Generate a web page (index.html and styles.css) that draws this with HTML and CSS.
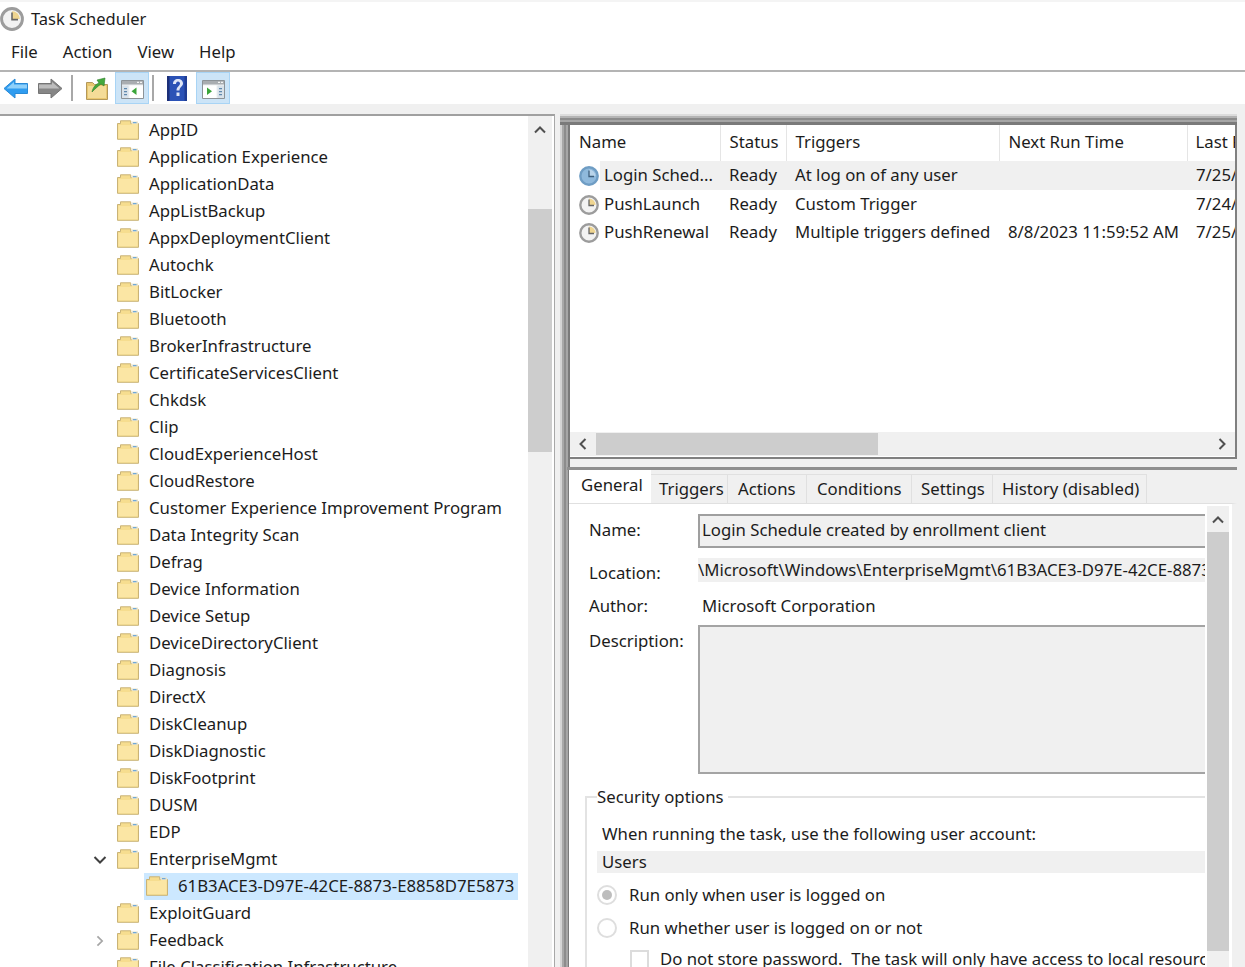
FILE: index.html
```html
<!DOCTYPE html>
<html lang="en">
<head>
    <meta charset="UTF-8">
    <meta name="viewport" content="width=device-width, initial-scale=1.0">
    <title>Task Scheduler</title>
    <link rel="stylesheet" href="styles.css">
</head>
<body>
    <svg class="defs" width="0" height="0" aria-hidden="true">
        <defs>
            <symbol id="folder" viewBox="0 0 22 20">
                <path d="M.5 3.500h3V.8h10.200v2.700H21.500v15.800H.5z" fill="#f6dd8f" stroke="#c9b377"/>
                <path d="M1.500 5h13l1.500-1.500h4.500V18.300H1.500z" fill="#fbe6a4"/>
                <path d="M14.500 1.500h6.500v2.500h-6.500z" fill="#e9e2c8"/>
                <path d="M16 2h3.500v1.200H16z" fill="#6fa8d8"/>
            </symbol>
            <symbol id="clock" viewBox="0 0 20 20">
                <circle cx="10" cy="10" r="8.700" fill="#f2f2f2" stroke="#9c9c9c" stroke-width="2.400"/>
                <path d="M10 3.500a6.500 6.500 0 0 1 6.500 6.500H10z" fill="#efd590"/>
                <path d="M10 4.500V10.500H15" fill="none" stroke="#666" stroke-width="1.300"/>
            </symbol>
            <symbol id="clock-run" viewBox="0 0 20 20">
                <circle cx="10" cy="10" r="8.700" fill="#8fb9dc" stroke="#6f9dc4" stroke-width="2.400"/>
                <path d="M10 3.500a6.500 6.500 0 0 1 6.500 6.500H10z" fill="#b9d4ea"/>
                <path d="M10 4.500V10.500H15" fill="none" stroke="#3d5f7d" stroke-width="1.300"/>
            </symbol>
            <symbol id="pane-left" viewBox="0 0 23 19">
                <path d="M.5.500h22v18H.5z" fill="#eef0f2" stroke="#8c9297"/>
                <path d="M1 1h21v3.500H1z" fill="#a9adb1"/>
                <path d="M16 1.800h2v1.200h-2zM19 1.800h2v1.200h-2z" fill="#f4f4f4"/>
                <path d="M1 5.500h6.500V18H1z" fill="#d9e2ea"/>
                <path d="M3 8h3v1.300H3zM3 11h3v1.300H3zM3 14h3v1.300H3z" fill="#5f88ad"/>
                <path d="M8.500 5.500H22V18H8.500z" fill="#fff"/>
                <path d="M15.500 7.500v7.500L10.500 11.250z" fill="#3aa53a"/>
            </symbol>
            <symbol id="pane-right" viewBox="0 0 23 19">
                <path d="M.5.500h22v18H.5z" fill="#eef0f2" stroke="#8c9297"/>
                <path d="M1 1h21v3.500H1z" fill="#a9adb1"/>
                <path d="M16 1.800h2v1.200h-2zM19 1.800h2v1.200h-2z" fill="#f4f4f4"/>
                <path d="M15.500 5.500H22V18h-6.500z" fill="#d9e2ea"/>
                <path d="M17 8h3v1.300h-3zM17 11h3v1.300h-3zM17 14h3v1.300h-3z" fill="#5f88ad"/>
                <path d="M1 5.500h13.500V18H1z" fill="#fff"/>
                <path d="M5 7.500v7.500l5-3.750z" fill="#3aa53a"/>
            </symbol>
        </defs>
    </svg>

    <header class="title-bar">
        <svg class="app-icon"><use href="#clock"/></svg>
        <span>Task Scheduler</span>
    </header>

    <nav class="menu-bar">
        <span>File</span>
        <span>Action</span>
        <span>View</span>
        <span>Help</span>
    </nav>

    <div class="toolbar">
        <svg class="tool-arrow" viewBox="0 0 25 21">
            <path d="M1 10.500 12 1v4.500H24.500v10H12V20z" fill="#2f9cf0" stroke="#2a8ad6"/>
            <path d="M4 10 11 4v2.500h13V10.500H4z" fill="#8fd0fa"/>
        </svg>
        <svg class="tool-arrow" viewBox="0 0 25 21">
            <path d="M24 10.500 13 1v4.500H.5v10H13V20z" fill="#868686" stroke="#757575"/>
            <path d="M21 10 14 4v2.500H1V10.500h20z" fill="#bdbdbd"/>
        </svg>
        <i class="sep"></i>
        <svg class="tool-up" viewBox="0 0 22 24">
            <path d="M.5 6.500h6l2 2h13v15H.5z" fill="#e9c76f" stroke="#b3985a"/>
            <path d="M2 10h18v12H2z" fill="#f4dc98"/>
            <path d="M6 16c1-5 4-8 7-9L11 4l8-2-1 8-3-2c-3 2-6 5-9 8z" fill="#43a83c" stroke="#2d7d2a" stroke-width=".6"/>
        </svg>
        <span class="tool-btn"><svg class="tool-pane"><use href="#pane-left"/></svg></span>
        <i class="sep"></i>
        <svg class="tool-help" viewBox="0 0 20 25">
            <path d="M0 0h20v25H0z" fill="#2b52b6"/>
            <path d="M0 0h2.500v25H0z" fill="#1c2f78"/>
            <path d="M17.500 0H20v25h-2.500z" fill="#1f3d94"/>
            <path d="M6 8c0-3 2-5 5-5s5 2 5 4.500c0 3-3.500 3.500-3.500 7H9.500c0-4 3.500-4.500 3.500-7 0-1-.8-2-2-2s-2 1-2 2.500zM9.500 16.500h3V20h-3z" fill="#dfe6f7"/>
        </svg>
        <span class="tool-btn"><svg class="tool-pane"><use href="#pane-right"/></svg></span>
    </div>

    <main class="panes">
        <section class="tree-pane">
            <ul class="tree">
                <li><svg class="folder"><use href="#folder"/></svg>AppID</li>
                <li><svg class="folder"><use href="#folder"/></svg>Application Experience</li>
                <li><svg class="folder"><use href="#folder"/></svg>ApplicationData</li>
                <li><svg class="folder"><use href="#folder"/></svg>AppListBackup</li>
                <li><svg class="folder"><use href="#folder"/></svg>AppxDeploymentClient</li>
                <li><svg class="folder"><use href="#folder"/></svg>Autochk</li>
                <li><svg class="folder"><use href="#folder"/></svg>BitLocker</li>
                <li><svg class="folder"><use href="#folder"/></svg>Bluetooth</li>
                <li><svg class="folder"><use href="#folder"/></svg>BrokerInfrastructure</li>
                <li><svg class="folder"><use href="#folder"/></svg>CertificateServicesClient</li>
                <li><svg class="folder"><use href="#folder"/></svg>Chkdsk</li>
                <li><svg class="folder"><use href="#folder"/></svg>Clip</li>
                <li><svg class="folder"><use href="#folder"/></svg>CloudExperienceHost</li>
                <li><svg class="folder"><use href="#folder"/></svg>CloudRestore</li>
                <li><svg class="folder"><use href="#folder"/></svg>Customer Experience Improvement Program</li>
                <li><svg class="folder"><use href="#folder"/></svg>Data Integrity Scan</li>
                <li><svg class="folder"><use href="#folder"/></svg>Defrag</li>
                <li><svg class="folder"><use href="#folder"/></svg>Device Information</li>
                <li><svg class="folder"><use href="#folder"/></svg>Device Setup</li>
                <li><svg class="folder"><use href="#folder"/></svg>DeviceDirectoryClient</li>
                <li><svg class="folder"><use href="#folder"/></svg>Diagnosis</li>
                <li><svg class="folder"><use href="#folder"/></svg>DirectX</li>
                <li><svg class="folder"><use href="#folder"/></svg>DiskCleanup</li>
                <li><svg class="folder"><use href="#folder"/></svg>DiskDiagnostic</li>
                <li><svg class="folder"><use href="#folder"/></svg>DiskFootprint</li>
                <li><svg class="folder"><use href="#folder"/></svg>DUSM</li>
                <li><svg class="folder"><use href="#folder"/></svg>EDP</li>
                <li>
                    <svg class="chevron" viewBox="0 0 14 12"><path d="M1.500 3 7 8.500 12.500 3" fill="none" stroke="#404040" stroke-width="2"/></svg>
                    <svg class="folder"><use href="#folder"/></svg>EnterpriseMgmt
                </li>
                <li class="child"><svg class="folder"><use href="#folder"/></svg>61B3ACE3-D97E-42CE-8873-E8858D7E5873</li>
                <li><svg class="folder"><use href="#folder"/></svg>ExploitGuard</li>
                <li>
                    <svg class="chevron" viewBox="0 0 14 14"><path d="M4 1.500 9.500 7 4 12.500" fill="none" stroke="#a6a6a6" stroke-width="2"/></svg>
                    <svg class="folder"><use href="#folder"/></svg>Feedback
                </li>
                <li><svg class="folder"><use href="#folder"/></svg>File Classification Infrastructure</li>
            </ul>
            <div class="vscroll tree-scroll">
                <svg class="arrow" viewBox="0 0 12 8"><path d="M1 6.500 6 1.500l5 5" fill="none" stroke="#505050" stroke-width="2"/></svg>
                <div class="thumb"></div>
            </div>
        </section>

        <section class="detail">
            <div class="task-list">
                <table class="tasks">
                    <colgroup>
                        <col class="col-name"><col class="col-status"><col class="col-triggers"><col class="col-next"><col class="col-last">
                    </colgroup>
                    <thead>
                        <tr><th>Name</th><th>Status</th><th>Triggers</th><th>Next Run Time</th><th>Last Run</th></tr>
                    </thead>
                    <tbody>
                        <tr class="current">
                            <td><svg class="clock"><use href="#clock-run"/></svg><span class="task-name">Login Sched...</span></td>
                            <td>Ready</td><td>At log on of any user</td><td></td><td>7/25/2023</td>
                        </tr>
                        <tr>
                            <td><svg class="clock"><use href="#clock"/></svg><span class="task-name">PushLaunch</span></td>
                            <td>Ready</td><td>Custom Trigger</td><td></td><td>7/24/2023</td>
                        </tr>
                        <tr>
                            <td><svg class="clock"><use href="#clock"/></svg><span class="task-name">PushRenewal</span></td>
                            <td>Ready</td><td>Multiple triggers defined</td><td>8/8/2023 11:59:52 AM</td><td>7/25/2023</td>
                        </tr>
                    </tbody>
                </table>
                <div class="hscroll">
                    <svg class="arrow-h" viewBox="0 0 8 12"><path d="M6.500 1 1.500 6l5 5" fill="none" stroke="#505050" stroke-width="2"/></svg>
                    <div class="hthumb"></div>
                    <svg class="arrow-h" viewBox="0 0 8 12"><path d="M1.500 1l5 5-5 5" fill="none" stroke="#505050" stroke-width="2"/></svg>
                </div>
            </div>

            <div class="task-props">
                <div class="tabs">
                    <span class="tab tab-general">General</span>
                    <span class="tab tab-triggers">Triggers</span>
                    <span class="tab tab-actions">Actions</span>
                    <span class="tab tab-conditions">Conditions</span>
                    <span class="tab tab-settings">Settings</span>
                    <span class="tab tab-history">History (disabled)</span>
                </div>
                <div class="tab-page">
                    <div class="form">
                        <div class="field">
                            <label class="label-name">Name:</label>
                            <div class="input">Login Schedule created by enrollment client</div>
                        </div>
                        <div class="field field-location">
                            <label class="label-location">Location:</label>
                            <div class="readonly">\Microsoft\Windows\EnterpriseMgmt\61B3ACE3-D97E-42CE-8873-E8858D7E5873</div>
                        </div>
                        <div class="field field-author">
                            <label>Author:</label>
                            <div class="plain">Microsoft Corporation</div>
                        </div>
                        <div class="field field-desc">
                            <label class="label-desc">Description:</label>
                            <div class="textarea"></div>
                        </div>
                        <fieldset class="security">
                            <legend>Security options</legend>
                            <p class="account-line">When running the task, use the following user account:</p>
                            <div class="users">Users</div>
                            <div class="radio-row radio-first"><i class="radio radio-on"></i>Run only when user is logged on</div>
                            <div class="radio-row"><i class="radio"></i>Run whether user is logged on or not</div>
                            <div class="check-row"><i class="check"></i>Do not store password.&nbsp; The task will only have access to local resources</div>
                        </fieldset>
                    </div>
                    <div class="vscroll form-scroll">
                        <svg class="arrow" viewBox="0 0 12 8"><path d="M1 6.500 6 1.500l5 5" fill="none" stroke="#505050" stroke-width="2"/></svg>
                        <div class="thumb"></div>
                    </div>
                </div>
            </div>
        </section>
    </main>
</body>
</html>
```

FILE: styles.css
```css
* {
    box-sizing: border-box;
}
html, body {
    height: 100%;
}
body {
    margin: 0;
    overflow: hidden;
    background-color: white;
    color: #1c1c1c;
    font-family: "Noto Sans", Arial, sans-serif;
    font-size: 16.750px;
    line-height: 24px;
}
.defs {
    position: absolute;
}

/* window top */
.title-bar {
    display: flex;
    align-items: center;
    height: 38px;
    padding-bottom: 2px;
    border-top: 2px solid #f4f4f4;
    font-size: 16.500px;
}
.app-icon {
    width: 24px;
    height: 24px;
    margin-right: 7px;
}
.menu-bar {
    display: flex;
    align-items: center;
    gap: 25px;
    height: 34px;
    padding: 0 0 5px 11px;
    border-bottom: 2px solid #b4b4b4;
}
.toolbar {
    display: flex;
    align-items: center;
    height: 32px;
    padding-left: 3px;
}
.tool-arrow {
    width: 25px;
    height: 21px;
    margin-right: 10px;
}
.sep {
    width: 2px;
    height: 26px;
    margin: 0 13px 0 -2px;
    background-color: #a8a8a8;
}
.tool-up {
    width: 22px;
    height: 24px;
    margin-right: 7px;
}
.tool-btn {
    display: flex;
    align-items: center;
    justify-content: center;
    width: 34px;
    height: 32px;
    margin-right: 5px;
    padding-top: 2px;
    background-color: #cce4f7;
    border: 1px solid #a8d4f5;
}
.tool-pane {
    width: 23px;
    height: 19px;
}
.tool-help {
    width: 20px;
    height: 25px;
    margin-right: 9px;
}

/* panes */
.panes {
    display: flex;
    height: 863px;
    padding-top: 10px;
    background-color: #f0f0f0;
}
.tree-pane {
    display: flex;
    flex: none;
    width: 555px;
    padding-right: 2px;
    background-color: white;
    border-top: 2px solid #a0a0a0;
    border-right: 1px solid #a8a8a8;
    overflow: hidden;
}
.tree {
    flex: 1;
    margin: 0;
    padding: 1px 10px 0 0;
    list-style: none;
}
.tree li {
    display: flex;
    position: relative;
    align-items: center;
    height: 27px;
    padding: 0 0 2px 117px;
    white-space: nowrap;
}
.tree li.child {
    margin-left: 144px;
    padding-left: 2px;
    background-color: #cce8ff;
}
.folder {
    flex: none;
    width: 22px;
    height: 20px;
    margin-right: 10px;
}
.chevron {
    position: absolute;
    top: 8px;
    left: 93px;
    width: 14px;
    height: 12px;
}
.vscroll {
    display: flex;
    flex: none;
    flex-direction: column;
    align-items: center;
    width: 24px;
    background-color: #f0f0f0;
}
.arrow {
    flex: none;
    width: 12px;
    height: 8px;
    margin-top: 10px;
}
.tree-scroll .thumb {
    width: 100%;
    height: 243px;
    margin-top: 75px;
    background-color: #cdcdcd;
}

/* right side, the dragged sash leaves a ghost frame top and left */
.detail {
    flex: none;
    display: flex;
    flex-direction: column;
    width: 677px;
    margin-left: 5px;
    padding: 11px 0 0 10px;
    background:
        linear-gradient(180deg, #dcdcdc 0 2px, #b4b4b4 2px 4px, #8c8c8c 4px 6px, #a6a6a6 6px 8px, #7a7a7a 8px 11px) top / 100% 11px no-repeat,
        linear-gradient(90deg, #d4d4d4 0 2px, #a8a8a8 2px 4px, #8c8c8c 4px 6px, #a6a6a6 6px 8px, #7a7a7a 8px 10px) left / 10px 100% no-repeat,
        #f0f0f0;
}
.task-list {
    flex: none;
    display: flex;
    flex-direction: column;
    height: 334px;
    background-color: white;
    border-right: 2px solid #808080;
    border-bottom: 2px solid #808080;
    overflow: hidden;
}
.tasks {
    flex: none;
    width: 665px;
    height: 307px;
    border-collapse: collapse;
    table-layout: fixed;
}
.col-name {
    width: 150px;
}
.col-status {
    width: 66px;
}
.col-triggers {
    width: 213px;
}
.col-next {
    width: 188px;
}
.tasks thead tr {
    height: 36px;
}
.tasks tbody tr {
    height: 28.500px;
}
.tasks tbody tr:last-child {
    height: auto;
    vertical-align: top;
}
.tasks th {
    padding: 0 0 2px 9px;
    border-right: 1px solid #e5e5e5;
    font-weight: normal;
    text-align: left;
    white-space: nowrap;
    overflow: hidden;
}
.tasks th:last-child {
    padding-left: 8px;
    border-right: 0;
}
.tasks td {
    padding: 0 0 0 9px;
    white-space: nowrap;
    overflow: hidden;
}
.tasks tbody tr:last-child td {
    padding-top: 2px;
}
.current td {
    background-color: #f0f0f0;
}
.current td:first-child {
    background: linear-gradient(90deg, white 30px, #f0f0f0 30px);
}
.clock {
    width: 20px;
    height: 20px;
    margin-right: 5px;
    vertical-align: -5px;
}
.hscroll {
    display: flex;
    flex: none;
    position: relative;
    align-items: center;
    justify-content: space-between;
    height: 24px;
    padding: 0 9px;
    background-color: #f0f0f0;
}
.arrow-h {
    width: 8px;
    height: 12px;
}
.hthumb {
    position: absolute;
    top: 1px;
    bottom: 1px;
    left: 26px;
    width: 282px;
    background-color: #cdcdcd;
}

.task-props {
    flex: 1;
    display: flex;
    flex-direction: column;
    min-height: 0;
    margin: 8px 0 0 -3px;
    padding-left: 2px;
    border-top: 3px solid #8f8f8f;
    overflow: hidden;
}
.tabs {
    display: flex;
    flex: none;
    align-items: flex-end;
    height: 33px;
    background-color: #f0f0f0;
}
.tab {
    display: flex;
    align-items: center;
    height: 29px;
    padding-left: 9px;
    background-color: #f0f0f0;
    border: 1px solid #e0e0e0;
    border-width: 1px 1px 0 0;
}
.tab-general {
    width: 82px;
    height: 33px;
    padding: 0 0 3px 12px;
    background-color: white;
    border: 0;
}
.tab-triggers {
    width: 77px;
    padding-left: 8px;
}
.tab-actions {
    width: 79px;
    padding-left: 10px;
}
.tab-conditions {
    width: 105px;
    padding-left: 10px;
}
.tab-settings {
    width: 81px;
}
.tab-history {
    width: 154px;
}
.tab-page {
    flex: 1;
    display: flex;
    min-height: 0;
    padding: 2px 3px 0 0;
    background-color: white;
    border-top: 1px solid #e0e0e0;
    border-right: 5px solid #f0f0f0;
}
.form {
    flex: 1;
    min-width: 0;
    padding: 8px 0 0 20px;
    overflow: hidden;
}
.field {
    display: grid;
    grid-template-columns: 109px 1fr;
}
.field label {
    white-space: nowrap;
}
.label-name {
    padding-top: 4px;
}
.input {
    height: 34px;
    padding: 2px 0 0 2px;
    background-color: #f0f0f0;
    border: 2px solid #9f9f9f;
    border-right: 0;
    white-space: nowrap;
}
.field-location {
    margin-top: 10px;
}
.label-location {
    padding-top: 3px;
}
.readonly {
    height: 24px;
    background-color: #f0f0f0;
    white-space: nowrap;
    overflow: hidden;
}
.field-author {
    margin-top: 9px;
}
.plain {
    padding-left: 4px;
}
.field-desc {
    margin-top: 7px;
}
.label-desc {
    padding-top: 4px;
}
.textarea {
    height: 149px;
    background-color: #f0f0f0;
    border: 2px solid #a4a4a4;
    border-right: 0;
}
.security {
    min-width: 0;
    margin: 11px 0 0 -4px;
    padding: 0 0 0 10px;
    border: 2px solid #e3e3e3;
    border-right: 0;
    white-space: nowrap;
}
.security legend {
    padding: 0 4px 0 0;
}
.account-line {
    margin: 13px 0 5px 5px;
}
.users {
    height: 22px;
    padding-left: 5px;
    background-color: #f0f0f0;
    line-height: 22px;
}
.radio-row {
    display: flex;
    align-items: center;
    height: 33px;
}
.radio-first {
    margin-top: 5px;
}
.radio {
    flex: none;
    position: relative;
    width: 20px;
    height: 20px;
    margin-right: 12px;
    border: 2px solid #dedede;
    border-radius: 50%;
}
.radio-on::after {
    content: "";
    position: absolute;
    top: 3px;
    left: 3px;
    width: 10px;
    height: 10px;
    background-color: #bdbdbd;
    border-radius: 50%;
}
.check-row {
    display: flex;
    align-items: center;
    height: 30px;
    padding-left: 33px;
}
.check {
    flex: none;
    width: 19px;
    height: 19px;
    margin-right: 11px;
    border: 2px solid #dcdcdc;
}
.form-scroll {
    width: 22px;
    margin-left: 2px;
}
.form-scroll .thumb {
    width: 100%;
    height: 419px;
    margin-top: 8px;
    background-color: #cdcdcd;
}
```
